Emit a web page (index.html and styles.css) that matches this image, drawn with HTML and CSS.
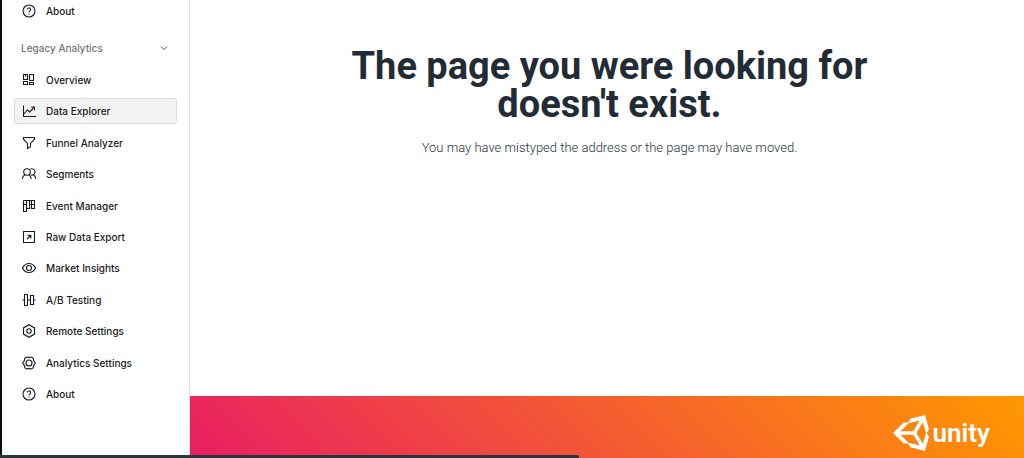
FILE: index.html
```html
<!DOCTYPE html>
<html lang="en">
<head>
  <meta charset="UTF-8">
  <title>Page not found</title>
  <link rel="stylesheet" href="styles.css">
</head>
<body>
  <div class="layout">
    <nav class="sidebar">
      <a href="#" class="nav-item">
        <svg class="icon" viewBox="0 0 14 14"><circle cx="7" cy="7" r="6"/><path d="M5.3 5.6a1.7 1.7 0 1 1 2.5 1.5q-.8.4-.8 1.1M7 9.5v1"/></svg>
        About
      </a>

      <button type="button" class="nav-heading">
        Legacy Analytics
        <svg class="chevron" viewBox="0 0 8 8"><path d="M1 2.5l3 3 3-3"/></svg>
      </button>

      <div class="nav-list">
        <a href="#" class="nav-item">
          <svg class="icon" viewBox="0 0 14 14"><path d="M1.5 1.5h4v5h-4zM7.5 1.5h4v6h-4zM1.5 8.5h4v3h-4zM7.5 9.5h4v2h-4zM3.5 1.5v2"/></svg>
          Overview
        </a>
        <a href="#" class="nav-item active">
          <svg class="icon" viewBox="0 0 14 14"><path d="M1.5 1.5v11H14M2 10l3.3-4 2.4 2L12 3.5M9 3h3.5v3.5"/></svg>
          Data Explorer
        </a>
        <a href="#" class="nav-item">
          <svg class="icon" viewBox="0 0 14 14"><path d="M1.5 1.5h11v1.7L8.5 7.5v3.3l-3 1.7v-5l-4-4.3z"/></svg>
          Funnel Analyzer
        </a>
        <a href="#" class="nav-item">
          <svg class="icon" viewBox="0 0 14 14"><circle cx="5" cy="5" r="3.3"/><path d="M.3 12c.2-2 1.2-3.3 2.7-4.2M7 7.8q1.600 1 2.300 4.200M8.500 2a3.200 3.200 0 1 1 .5 6M11.500 7.800c1.300.7 2 2.200 2.200 4.200"/></svg>
          Segments
        </a>
        <a href="#" class="nav-item">
          <svg class="icon" viewBox="0 0 14 14"><path d="M1.5 1.500h11v8h-3v-8M1.500 1.500v11h3v-11M4.500 9.500h3v-8M1.500 5.500h3M7.500 5.500h5"/></svg>
          Event Manager
        </a>
        <a href="#" class="nav-item">
          <svg class="icon" viewBox="0 0 14 14"><path d="M1.500 1.500h11v11h-11zM5 9l3.500-3.500M5.500 5.200h3.300v3.300"/></svg>
          Raw Data Export
        </a>
        <a href="#" class="nav-item">
          <svg class="icon" viewBox="0 0 14 14"><path d="M.4 7Q3 2.500 7 2.500T13.600 7Q11 11.500 7 11.500T.4 7z"/><circle cx="7" cy="7" r="2.500"/></svg>
          Market Insights
        </a>
        <a href="#" class="nav-item">
          <svg class="icon" viewBox="0 0 14 14"><path d="M2.500 1.500h3v11h-3zM8.500 2.500h3v9h-3zM.5 7h2M5.500 7h3M11.500 7h2"/></svg>
          A/B Testing
        </a>
        <a href="#" class="nav-item">
          <svg class="icon" viewBox="0 0 14 14"><path d="M7 .7l5.500 3.200v6.200L7 13.300l-5.500-3.200V3.900z"/><circle cx="7" cy="7" r="2.200"/></svg>
          Remote Settings
        </a>
        <a href="#" class="nav-item">
          <svg class="icon" viewBox="0 0 14 14"><path d="M4.500 1l2.500.6L9.500 1l1.700 1.200.5 2.500L13.400 7l-1.700 2.300-.5 2.500L9.500 13 7 12.400 4.500 13l-1.700-1.200-.5-2.500L.6 7l1.700-2.300.5-2.500z"/><circle cx="7" cy="7" r="3"/></svg>
          Analytics Settings
        </a>
        <a href="#" class="nav-item">
          <svg class="icon" viewBox="0 0 14 14"><circle cx="7" cy="7" r="6"/><path d="M5.3 5.6a1.7 1.7 0 1 1 2.5 1.5q-.8.4-.8 1.1M7 9.5v1"/></svg>
          About
        </a>
      </div>
    </nav>

    <div class="content">
      <main class="message">
        <h1>The page you were looking for doesn't exist.</h1>
        <p>You may have mistyped the address or the page may have moved.</p>
      </main>
      <footer class="footer">
        <a href="#" class="logo">
          <svg class="logo-mark" viewBox="15 14 484 484"><path d="M498.110 206.400L445.310 14.720 248.200 66.080 219 116.140l-59.200-.43L15.540 256l144.240 140.290 59.200-.43 29.190 50.070 197.140 51.340 52.800-191.620-30-49.630zM223.770 124.200L374.550 86.510 288 232.330H114.870zm0 263.630L114.870 279.710H288l86.550 145.810zm193 14L330.170 256l86.580-145.840L458.560 256z"/></svg>
          unity
        </a>
      </footer>
    </div>
  </div>
  <div class="status-bar"></div>
</body>
</html>
```

FILE: styles.css
```css
* {
  box-sizing: border-box;
}
body {
  margin: 0;
  background: white;
  color: #1a1a1a;
  font-family: Inter, sans-serif;
  font-size: 10px;
}
.layout {
  display: flex;
  min-height: 100vh;
  border-left: 2px solid #0b0d0f;
}
.sidebar {
  display: flex;
  flex-direction: column;
  width: 188px;
  padding: 0 12px 51px;
  border-right: 1px solid #ddd;
}
.nav-item {
  display: flex;
  align-items: center;
  gap: 10px;
  height: 26px;
  padding: 0 7px;
  border: 1px solid transparent;
  border-radius: 3px;
  color: #1a1a1a;
  font-weight: 500;
  text-decoration: none;
}
.nav-item:hover,
.nav-item.active {
  background: #f4f4f4;
  border-color: #ddd;
}
.sidebar > .nav-item {
  height: 22px;
}
.icon {
  width: 14px;
  height: 14px;
  fill: none;
  stroke: #1a1a1a;
  stroke-width: 1.1;
}
.nav-heading {
  display: flex;
  align-items: center;
  justify-content: space-between;
  height: 20px;
  margin: 16px 0 9px;
  padding: 0 9px 0 7px;
  border: none;
  background: none;
  color: #757575;
  font-family: inherit;
  font-size: 10px;
  font-weight: 500;
  cursor: pointer;
}
.chevron {
  width: 8px;
  height: 8px;
  fill: none;
  stroke: #555;
}
.nav-list {
  display: flex;
  flex: 1;
  flex-direction: column;
  justify-content: space-between;
}
.content {
  display: flex;
  flex: 1;
  flex-direction: column;
}
.message {
  flex: 1;
  padding: 47px 20px 20px 25px;
  font-family: Roboto, sans-serif;
  text-align: center;
}
.message h1 {
  max-width: 570px;
  margin: 0 auto 15px;
  color: #222c37;
  font-size: 38px;
  font-weight: 700;
  line-height: 38px;
}
.message p {
  margin: 0;
  color: #263238;
  font-size: 13px;
  font-weight: 300;
  line-height: 20px;
}
.footer {
  display: flex;
  align-items: center;
  justify-content: flex-end;
  height: 62px;
  padding: 12px 34px 0;
  background: linear-gradient(45deg, #e91e63, #ff9800);
}
.logo {
  display: flex;
  align-items: center;
  gap: 4px;
  color: white;
  font-family: Roboto, sans-serif;
  font-size: 26px;
  font-weight: 600;
  line-height: 34px;
  text-decoration: none;
}
.logo-mark {
  width: 36px;
  height: 36px;
  fill: white;
}
.status-bar {
  position: fixed;
  bottom: 0;
  left: 0;
  width: 579px;
  max-width: 100%;
  height: 3px;
  border-top-right-radius: 2px;
  background: #2b363c;
}
```
